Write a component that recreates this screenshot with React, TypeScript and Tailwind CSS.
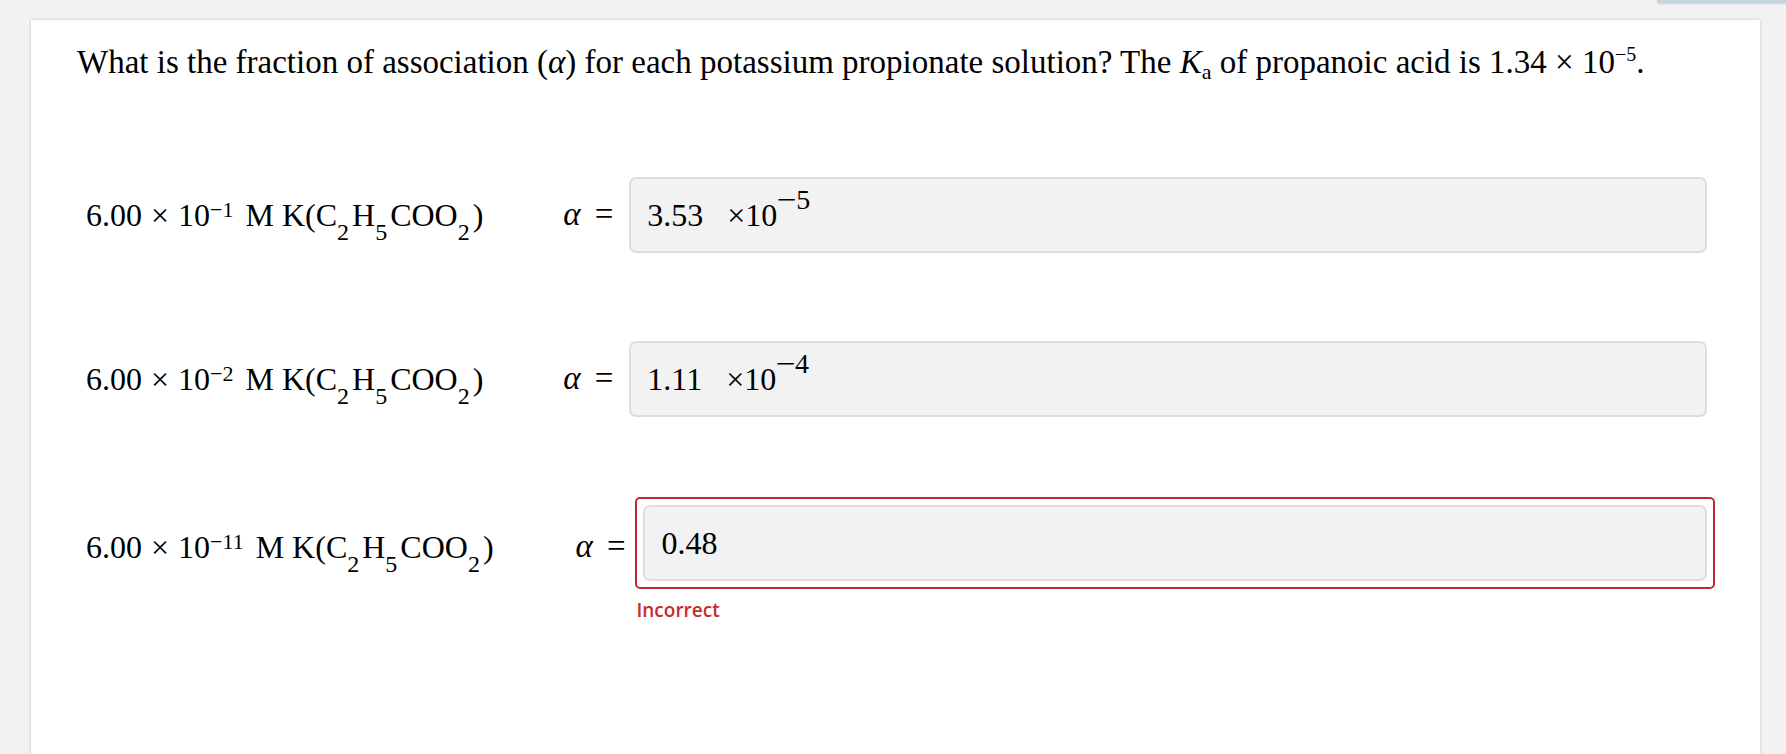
import React from "react";

const serif = "font-['Liberation_Serif','Times_New_Roman',serif]";

function Label({ exp }: { exp: string }) {
  return (
    <span className="text-[32px] leading-[40px] whitespace-nowrap text-black">
      6.00<span className="mx-[9px]">×</span>10
      <sup className="text-[22px] top-[-9px] mr-[2px]">−{exp}</sup>
      <span className="ml-[10px]">M</span> K(C<sub className="text-[24px] bottom-[-14px] mr-[3px]">2</sub>H
      <sub className="text-[24px] bottom-[-14px] mr-[3px]">5</sub>COO<sub className="text-[24px] bottom-[-14px] mr-[3px]">2</sub>)
    </span>
  );
}

function Alpha({ offset }: { offset: string }) {
  return (
    <span className={`${offset} text-[33px] whitespace-nowrap text-black`}>
      <i>α</i>
      <span className="ml-[14px]">=</span>
    </span>
  );
}

function Value({ base, exp }: { base: string; exp: string }) {
  return (
    <span className="text-[32px] whitespace-nowrap text-black">
      {base}
      <span className="ml-[24px]">×</span>10
      <sup className="text-[28px] top-[-17px] ml-[2px]">
        <span className="inline-block scale-x-125 mr-[1px]">−</span>
        {exp}
      </sup>
    </span>
  );
}

export default function App() {
  return (
    <div className={`${serif} relative min-h-screen bg-[#f2f2f2] pt-[20px]`}>
      {/* edge of a panel peeking in at the top right */}
      <div className="absolute top-0 right-0 w-[129px] h-[3px] bg-[#c6d6df] rounded-bl-[3px] shadow-[0_1px_2px_rgba(0,0,0,0.15)]" />

      <div className="ml-[31px] mr-[26px] min-h-[734px] bg-white shadow-[0_0_3px_rgba(0,0,0,0.2)] pt-[25px] pl-[46px] pr-[45px]">
        {/* Question */}
        <p className="text-[33px] leading-[34px] text-black whitespace-nowrap">
          What is the fraction of association (<i>α</i>) for each potassium propionate solution? The{" "}
          <i>K</i>
          <sub className="text-[22px] bottom-[-6px]">a</sub> of propanoic acid is 1.34 × 10
          <sup className="text-[20px] top-[-12px]">−5</sup>.
        </p>

        {/* Row 1 */}
        <div className="mt-[98px] flex items-center h-[76px] pl-[9px]">
          <Label exp="1" />
          <Alpha offset="ml-[80px]" />
          <div className="ml-[16px] mr-[8px] flex-1 h-full flex items-center pl-[16px] bg-[#f2f2f2] border-2 border-[#dedede] rounded-[7px]">
            <Value base="3.53" exp="5" />
          </div>
        </div>

        {/* Row 2 */}
        <div className="mt-[88px] flex items-center h-[76px] pl-[9px]">
          <Label exp="2" />
          <Alpha offset="ml-[80px]" />
          <div className="ml-[16px] mr-[8px] flex-1 h-full flex items-center pl-[16px] bg-[#f2f2f2] border-2 border-[#dedede] rounded-[7px]">
            <Value base="1.11" exp="4" />
          </div>
        </div>

        {/* Row 3 */}
        <div className="mt-[80px] flex items-start pl-[9px]">
          <div className="h-[92px] flex items-center pt-[8px]">
            <Label exp="11" />
            <Alpha offset="ml-[82px]" />
          </div>
          <div className="ml-[9px] flex-1 flex flex-col">
            <div className="h-[92px] p-[6px] border-2 border-[#c4282e] rounded-[5px]">
              <div className="h-full flex items-center pl-[17px] bg-[#f2f2f2] border-2 border-[#dedede] rounded-[7px] text-[32px] text-black">
                0.48
              </div>
            </div>
            <div className="mt-[8px] ml-[2px] font-['Open_Sans',sans-serif] font-semibold text-[19px] leading-[27px] text-[#c62a2f]">
              Incorrect
            </div>
          </div>
        </div>
      </div>
    </div>
  );
}
